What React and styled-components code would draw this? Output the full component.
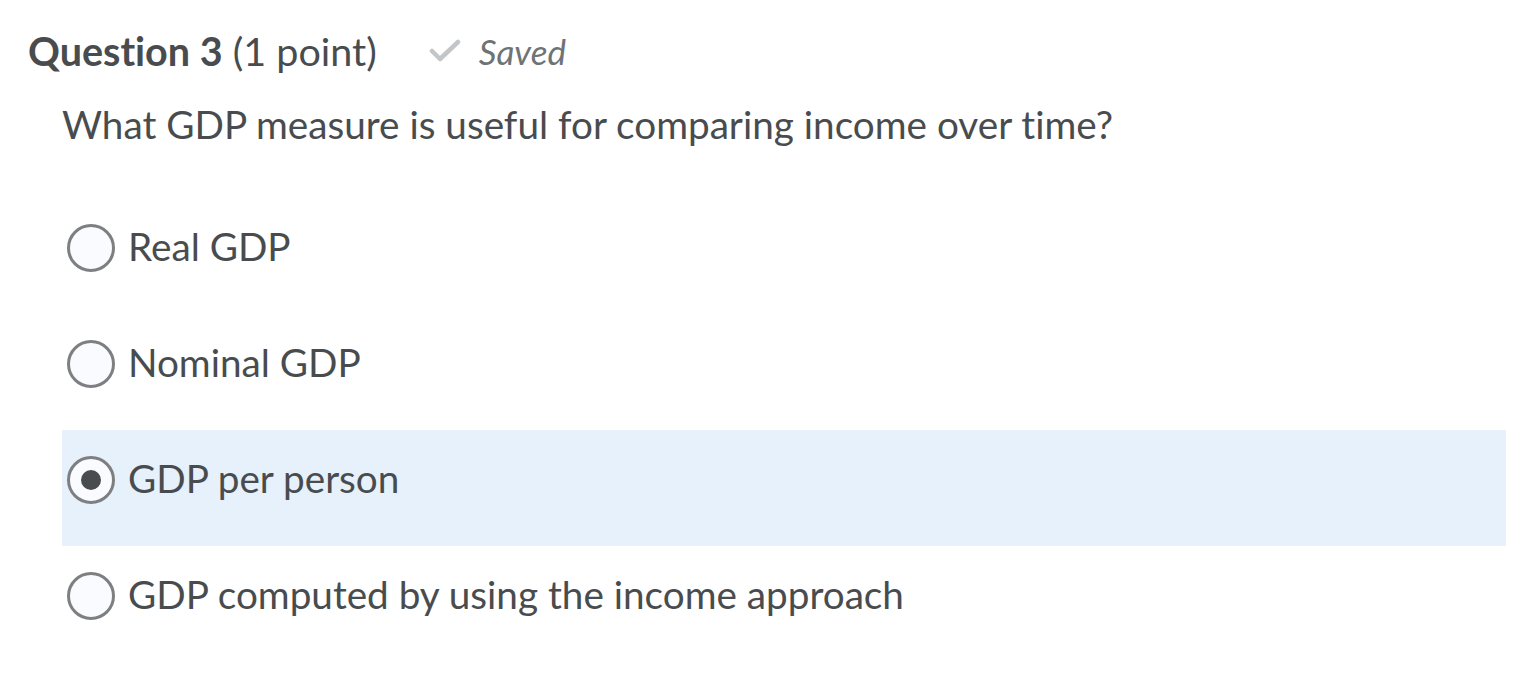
import React from "react";
import styled, { createGlobalStyle } from "styled-components";

const Global = createGlobalStyle`
  html, body { margin: 0; padding: 0; background: #ffffff; }
  body {
    font-family: Lato, "Open Sans", sans-serif;
    color: #494c4e;
    font-variant-ligatures: none;
  }
`;

const Page = styled.div`
  width: 1540px;
  height: 676px;
  padding: 28px 0 0 28px;
  box-sizing: border-box;
`;

const Header = styled.div`
  display: flex;
  align-items: center;
  height: 46px;
`;

const Title = styled.h2`
  margin: 0;
  font-size: 39.5px;
  font-weight: 400;
  line-height: 46px;
  color: #494c4e;
  white-space: nowrap;
`;

const Strong = styled.span`
  font-weight: 700;
`;

const Status = styled.div`
  display: flex;
  align-items: center;
  margin-left: 52px;
  gap: 18px;
  color: #6e7376;
  font-style: italic;
  font-size: 35px;
`;

const Prompt = styled.p`
  margin: 27px 0 0 34px;
  font-size: 38.7px;
  line-height: 46px;
  color: #494c4e;
  white-space: nowrap;
`;

const Options = styled.div`
  margin: 51px 0 0 34px;
  width: 1444px;
  display: flex;
  flex-direction: column;
`;

const Row = styled.label`
  height: 116px;
  box-sizing: border-box;
  padding: 26px 0 0 5px;
  display: flex;
  align-items: flex-start;
  background: ${(p) => (p.$selected ? "#e6f1fc" : "transparent")};
`;

const Line = styled.div`
  display: flex;
  align-items: center;
  height: 48px;
  gap: 13px;
`;

const Radio = styled.span`
  width: 48px;
  height: 48px;
  box-sizing: border-box;
  border-radius: 50%;
  border: 3px solid #7d7f81;
  background: #f9fbff;
  display: flex;
  align-items: center;
  justify-content: center;
  flex-shrink: 0;
`;

const Dot = styled.span`
  width: 20px;
  height: 20px;
  border-radius: 50%;
  background: #494c4e;
`;

const OptionText = styled.span`
  font-size: 38.7px;
  color: #494c4e;
  white-space: nowrap;
  padding-bottom: 5px;
`;

const options = [
  "Real GDP",
  "Nominal GDP",
  "GDP per person",
  "GDP computed by using the income approach",
];

export default function App() {
  const selected = 2;
  return (
    <Page>
      <Global />
      <Header>
        <Title>
          <Strong>Question 3</Strong> (1 point)
        </Title>
        <Status>
          <svg width="32" height="24" viewBox="0 0 32 24" aria-hidden="true">
            <polyline
              points="3,12 11,20 29,3"
              fill="none"
              stroke="#c3c6c9"
              strokeWidth="4.5"
              strokeLinecap="round"
              strokeLinejoin="round"
            />
          </svg>
          <span>Saved</span>
        </Status>
      </Header>
      <Prompt>What GDP measure is useful for comparing income over time?</Prompt>
      <Options>
        {options.map((o, i) => (
          <Row key={o} $selected={i === selected}>
            <Line>
              <Radio>{i === selected && <Dot />}</Radio>
              <OptionText>{o}</OptionText>
            </Line>
          </Row>
        ))}
      </Options>
    </Page>
  );
}
